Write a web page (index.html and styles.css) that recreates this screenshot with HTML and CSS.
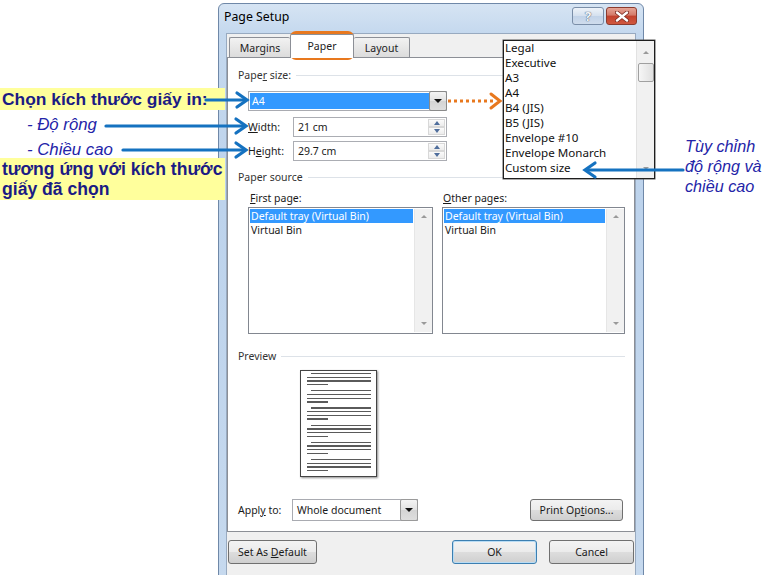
FILE: index.html
```html
<!DOCTYPE html>
<html lang="vi">
<head>
<meta charset="utf-8">
<title>Page Setup</title>
<link rel="stylesheet" href="styles.css">
</head>
<body>
<div class="stage">

  <div class="window">
    <div class="titlebar">
      <span class="title">Page Setup</span>
      <div class="tb-btns">
        <span class="tb help">?</span>
        <span class="tb close"><svg width="14" height="11" viewBox="0 0 14 11"><path d="M2 1.5 L12 9.5 M12 1.5 L2 9.5" stroke="#7a2a20" stroke-width="4" stroke-linecap="round"/><path d="M2 1.5 L12 9.5 M12 1.5 L2 9.5" stroke="#fff" stroke-width="2.4" stroke-linecap="round"/></svg></span>
      </div>
    </div>
    <div class="client">
      <div class="tabs">
        <div class="tab">Margins</div>
        <div class="tab active">Paper</div>
        <div class="tab">Layout</div>
      </div>
      <div class="panel">
        <div class="group-head"><span>Pape<u>r</u> size:</span><i class="rule"></i></div>
        <div class="indent">
          <div class="combo size-combo">
            <span class="combo-val selected">A4</span>
            <span class="combo-btn"><i class="tri"></i></span>
          </div>
          <div class="field-row first">
            <span class="field-label"><u>W</u>idth:</span>
            <div class="spin-input"><span class="spin-val">21 cm</span><span class="spin"><i class="sb"><b class="up"></b></i><i class="sb"><b class="down"></b></i></span></div>
          </div>
          <div class="field-row">
            <span class="field-label">H<u>e</u>ight:</span>
            <div class="spin-input"><span class="spin-val">29.7 cm</span><span class="spin"><i class="sb"><b class="up"></b></i><i class="sb"><b class="down"></b></i></span></div>
          </div>
        </div>

        <div class="group-head gap-source"><span>Paper source</span><i class="rule"></i></div>
        <div class="indent sources">
          <div class="source first-src">
            <div class="src-label"><u>F</u>irst page:</div>
            <div class="listbox">
              <div class="items">
                <div class="item selected">Default tray (Virtual Bin)</div>
                <div class="item">Virtual Bin</div>
              </div>
              <div class="vscroll"><b class="up-g"></b><b class="down-g"></b></div>
            </div>
          </div>
          <div class="source other-src">
            <div class="src-label"><u>O</u>ther pages:</div>
            <div class="listbox">
              <div class="items">
                <div class="item selected">Default tray (Virtual Bin)</div>
                <div class="item">Virtual Bin</div>
              </div>
              <div class="vscroll"><b class="up-g"></b><b class="down-g"></b></div>
            </div>
          </div>
        </div>

        <div class="group-head gap-preview"><span>Preview</span><i class="rule"></i></div>
        <div class="preview-page">
          <div class="para"><i class="ln ind"></i><i class="ln"></i><i class="ln"></i><i class="ln short"></i></div>
          <div class="para"><i class="ln ind"></i><i class="ln"></i><i class="ln"></i><i class="ln short"></i></div>
          <div class="para"><i class="ln ind"></i><i class="ln"></i><i class="ln"></i><i class="ln short"></i></div>
          <div class="para"><i class="ln ind"></i><i class="ln"></i><i class="ln"></i><i class="ln short"></i></div>
          <div class="para"><i class="ln ind"></i><i class="ln"></i><i class="ln"></i><i class="ln short"></i></div>
          <div class="para"><i class="ln ind"></i><i class="ln"></i><i class="ln"></i><i class="ln short"></i></div>
        </div>

        <div class="apply-row">
          <span class="apply-label">Appl<u>y</u> to:</span>
          <div class="combo apply-combo">
            <span class="combo-val">Whole document</span>
            <span class="combo-btn"><i class="tri"></i></span>
          </div>
          <button class="btn print-btn"><span>Print Op<u>t</u>ions...</span></button>
        </div>
      </div>
      <div class="buttons">
        <button class="btn default-btn"><span>Set As <u>D</u>efault</span></button>
        <span class="spacer"></span>
        <button class="btn ok-btn"><span>OK</span></button>
        <button class="btn cancel-btn"><span>Cancel</span></button>
      </div>
    </div>
  </div>

  <div class="tab-highlight"></div>

  <div class="dropdown">
    <div class="dd-items">
      <div>Legal</div>
      <div>Executive</div>
      <div>A3</div>
      <div>A4</div>
      <div>B4 (JIS)</div>
      <div>B5 (JIS)</div>
      <div>Envelope #10</div>
      <div>Envelope Monarch</div>
      <div>Custom size</div>
    </div>
    <div class="dd-scroll"><b class="up-g"></b><span class="thumb"></span><b class="down-g"></b></div>
  </div>

  <div class="note bold line1">Chọn kích thước giấy in:</div>
  <div class="note ital w-note">- Độ rộng</div>
  <div class="note ital h-note">- Chiều cao</div>
  <div class="note bold line2">tương ứng với kích thước<br>giấy đã chọn</div>
  <div class="note ital right-note">Tùy chỉnh<br>độ rộng và<br>chiều cao</div>

  <svg class="arrows" width="768" height="575" viewBox="0 0 768 575">
    <g stroke="#1572c0" stroke-width="3.2" fill="none" stroke-linecap="round" stroke-linejoin="miter">
      <path d="M206 100 H244"/>
      <path d="M237 93 L247 100 L237 107"/>
      <path d="M106 126 H243"/>
      <path d="M236 119 L246 126 L236 133"/>
      <path d="M123 150 H243"/>
      <path d="M236 143 L246 150 L236 157"/>
      <path d="M683 170 H588"/>
      <path d="M595 163 L585 170 L595 177"/>
    </g>
    <g stroke="#e8781e" stroke-width="3" fill="none">
      <path d="M448 101 H494" stroke-dasharray="3 3"/>
      <path d="M491 94 L500 101 L491 108" stroke-linecap="round"/>
    </g>
  </svg>
</div>
</body>
</html>
```

FILE: styles.css
```css
* { box-sizing: border-box; }
body { margin: 0; }
.stage {
  position: relative;
  width: 768px;
  height: 575px;
  overflow: hidden;
  background: #fff;
  font-family: "Noto Sans", "Open Sans", sans-serif;
  font-size: 10.5px;
  color: #1a1a1a;
}
u { text-decoration: underline; text-underline-offset: 1px; }

/* window frame */
.window {
  position: absolute;
  left: 218px;
  top: 3px;
  width: 426px;
  height: 580px;
  border: 1px solid #6f88a8;
  border-radius: 6px 6px 0 0;
  background: linear-gradient(#d6e4f3, #c4d8ee 30px, #bdd3ec 200px, #c6d9ee);
  padding: 0 7px;
  display: flex;
  flex-direction: column;
}
.titlebar {
  height: 29px;
  margin: 0 -7px;
  padding: 0 6px 0 5px;
  display: flex;
  align-items: flex-start;
  justify-content: space-between;
}
.title {
  font-size: 12.3px;
  line-height: 14px;
  margin-top: 6px;
  color: #000;
}
.tb-btns { display: flex; gap: 2px; margin-top: 3px; }
.tb {
  height: 18px;
  border-radius: 3px;
  display: flex;
  align-items: center;
  justify-content: center;
}
.help {
  width: 32px;
  border: 1px solid #7a8ea8;
  background: linear-gradient(#eef3f9, #d4e0ee 50%, #c2d3e8 51%, #cfdcec);
  color: #f4f6f9;
  font-weight: bold;
  font-size: 13px;
  text-shadow: 0 0 1px #44556b, 0 0 1px #44556b;
}
.close {
  width: 31px;
  border: 1px solid #8b3b2e;
  background: linear-gradient(#e6a596, #d47a69 45%, #c2412d 50%, #d0583f);
}

.client {
  flex: 1;
  background: #f0f0f0;
  border: 1px solid #98aac0;
  display: flex;
  flex-direction: column;
}
.tabs {
  height: 23px;
  display: flex;
  align-items: flex-end;
  padding-left: 2px;
}
.tab {
  height: 20px;
  border: 1px solid #8c8f96;
  border-bottom: none;
  border-radius: 2px 2px 0 0;
  background: linear-gradient(#f2f2f2, #dcdcdc);
  display: flex;
  align-items: center;
  justify-content: center;
  color: #222;
}
.tab:first-child { width: 61px; border-right: none; }
.tab.active {
  width: 64px;
  height: 24px;
  margin-bottom: -1px;
  background: #fff;
  position: relative;
  z-index: 1;
  padding-bottom: 2px;
}
.tab:last-child { width: 56px; border-left: none; }

.panel {
  height: 475px;
  background: #fff;
  border: 1px solid #8c8f96;
  padding: 0 9px 0 10px;
  display: flex;
  flex-direction: column;
}
.group-head {
  height: 14px;
  margin-top: 10px;
  display: flex;
  align-items: center;
  gap: 5px;
  line-height: 14px;
  color: #333;
}
.group-head .rule { flex: 1; height: 1px; background: #dde2e8; margin-top: 1px; }
.gap-source { margin-top: 9px; }
.gap-preview { margin-top: 15px; }
.indent { padding-left: 10px; display: flex; flex-direction: column; }

.combo {
  display: flex;
  border: 1px solid #a9abb1;
  background: #fff;
  padding: 1px;
}
.size-combo { margin-top: 9px; width: 199px; height: 20px; }
.combo-val { flex: 1; line-height: 16px; padding-left: 2px; }
.combo-val.selected { background: #3399ff; color: #fff; }
.combo-btn {
  width: 18px;
  margin: -2px -2px -2px 0;
  border: 1px solid #8a8a8a;
  border-radius: 2px;
  background: linear-gradient(#f4f4f4, #e2e2e2 50%, #d4d4d4 51%, #dedede);
  display: flex;
  align-items: center;
  justify-content: center;
}
.tri {
  width: 0;
  height: 0;
  border-left: 4px solid transparent;
  border-right: 4px solid transparent;
  border-top: 4px solid #111;
}

.field-row { display: flex; align-items: center; height: 20px; margin-top: 4px; }
.field-row.first { margin-top: 6px; }
.field-label { width: 45px; }
.spin-input {
  width: 154px;
  height: 20px;
  border: 1px solid #abadb3;
  display: flex;
  background: #fff;
}
.spin-val { flex: 1; padding-left: 4px; line-height: 18px; }
.spin { width: 18px; display: flex; flex-direction: column; padding: 1px 1px 1px 0; }
.sb {
  flex: 1;
  border: 1px solid #d8d8d8;
  background: linear-gradient(#fbfbfb, #ececec);
  display: flex;
  align-items: center;
  justify-content: center;
}
.up, .down { width: 0; height: 0; border-left: 3.5px solid transparent; border-right: 3.5px solid transparent; }
.up { border-bottom: 4px solid #4f6e9c; }
.down { border-top: 4px solid #4f6e9c; }

.sources { flex-direction: row; gap: 9px; }
.first-src { width: 185px; }
.other-src { width: 183px; }
.src-label { height: 14px; line-height: 14px; margin-top: 7px; margin-bottom: 2px; padding-left: 2px; }
.other-src .src-label { padding-left: 1px; }
.listbox {
  height: 127px;
  border: 1px solid #828790;
  display: flex;
  padding: 1px 0 1px 1px;
  background: #fff;
}
.items { flex: 1; padding-right: 1px; }
.item { line-height: 14px; height: 14px; padding-left: 1px; white-space: nowrap; }
.item.selected { background: #3399ff; color: #fff; }
.vscroll {
  width: 18px;
  background: #f1f1f1;
  border-left: 1px solid #e6e6e6;
  display: flex;
  flex-direction: column;
  justify-content: space-between;
  align-items: center;
  padding: 6px 0 7px;
}
.up-g, .down-g { width: 0; height: 0; border-left: 3.5px solid transparent; border-right: 3.5px solid transparent; }
.up-g { border-bottom: 3.5px solid #9a9a9a; }
.down-g { border-top: 3.5px solid #9a9a9a; }

.preview-page {
  margin: 7px 0 0 62px;
  width: 77px;
  height: 107px;
  border: 1px solid #444;
  box-shadow: 1px 1px 2px rgba(0,0,0,0.45);
  background: #fff;
  padding: 2px 5px 0 6px;
  display: flex;
  flex-direction: column;
}
.para { height: 17.3px; display: flex; flex-direction: column; gap: 2.4px; }
.ln { display: block; height: 1.3px; background: #5a5a5a; }
.ln.ind { margin-left: 4px; }
.ln.short { width: 21px; }

.apply-row {
  margin-top: 22px;
  height: 22px;
  display: flex;
  align-items: center;
}
.apply-label { width: 54px; }
.apply-combo { width: 126px; height: 22px; }
.apply-combo .combo-val { line-height: 18px; padding-left: 3px; }
.apply-combo .combo-btn { border-color: #9a9a9a; }
.btn {
  font: inherit;
  color: #1a1a1a;
  height: 22px;
  border: 1px solid #707070;
  border-radius: 3px;
  background: linear-gradient(#f3f3f3, #ebebeb 50%, #dddddd 51%, #cfcfcf);
  padding: 0;
  display: flex;
  align-items: center;
  justify-content: center;
}
.print-btn { width: 93px; margin-left: auto; margin-right: 2px; }

.buttons {
  display: flex;
  margin-top: 8px;
  padding: 0 1px;
  gap: 12px;
}
.buttons .btn { height: 24px; }
.default-btn { width: 89px; }
.spacer { flex: 1; }
.ok-btn { width: 85px; border-color: #3c7fb1; box-shadow: inset 0 0 0 1px #b9dcf4; }
.cancel-btn { width: 85px; }

/* callout overlays */
.tab-highlight {
  position: absolute;
  left: 290px;
  top: 31px;
  width: 64px;
  height: 29px;
  border: 3px solid #e8781e;
  border-radius: 6px;
}
.dropdown {
  position: absolute;
  left: 503px;
  top: 40px;
  width: 152px;
  height: 139px;
  border: 1px solid #1e1e1e;
  box-shadow: 0 0 0 0.5px #555;
  background: #fff;
  display: flex;
  font-size: 11.6px;
  color: #111;
}
.dd-items { flex: 1; padding-left: 1px; margin-top: -1px; }
.dd-items div { line-height: 15px; height: 15px; white-space: nowrap; }
.dd-scroll {
  width: 18px;
  background: #f1f1f1;
  border-left: 1px solid #e2e2e2;
  display: flex;
  flex-direction: column;
  align-items: center;
  padding: 10px 0 8px;
}
.dd-scroll .thumb {
  width: 16px;
  height: 19px;
  margin-top: 9px;
  border: 1px solid #a0a0a0;
  border-radius: 2px;
  background: linear-gradient(90deg, #f6f6f6, #e0e0e0);
}
.dd-scroll .down-g { margin-top: auto; }

.note {
  position: absolute;
  font-family: "Liberation Sans", Arial, sans-serif;
  white-space: nowrap;
}
.bold { font-weight: bold; font-size: 17.4px; color: #1b1b84; background: #ffff9c; padding-left: 2px; width: 225px; }
.line1 { left: 0; top: 88px; height: 22px; line-height: 22px; }
.line2 { left: 0; top: 158px; height: 42px; line-height: 20px; padding-top: 1px; font-size: 17.6px; }
.ital { font-style: italic; font-size: 16.8px; color: #2424a8; line-height: 20px; }
.w-note { left: 27px; top: 115px; }
.h-note { left: 27px; top: 140px; }
.right-note { left: 685px; top: 136px; font-size: 16.2px; }

.arrows { position: absolute; left: 0; top: 0; pointer-events: none; }
```
